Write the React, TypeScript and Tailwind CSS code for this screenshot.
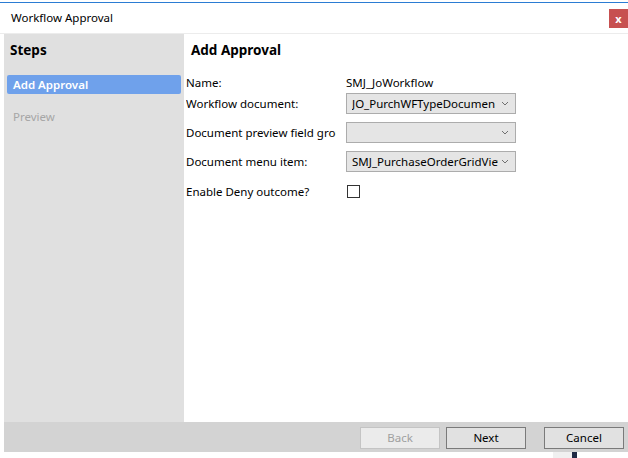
import React from "react";

const font = { fontFamily: '"Noto Sans", "Open Sans", sans-serif' };

function Chevron() {
  return (
    <svg width="8" height="5" viewBox="0 0 8 5" className="shrink-0">
      <path d="M1 1 L4 4 L7 1" fill="none" stroke="#707070" strokeWidth="1" />
    </svg>
  );
}

function Select({ value }: { value: string }) {
  return (
    <div className="flex h-[21px] w-[170px] items-center justify-between border border-[#acacac] bg-[#e5e5e5] pl-[5px] pr-[6px]">
      <span className="w-[146px] overflow-hidden whitespace-nowrap text-[11.5px] text-black">{value}</span>
      <Chevron />
    </div>
  );
}

function Row({ label, children, className }: { label: string; children: React.ReactNode; className: string }) {
  return (
    <div className={"flex items-center " + className}>
      <div className="mr-[10px] w-[150px] overflow-hidden whitespace-nowrap text-[11.5px] text-black">{label}</div>
      {children}
    </div>
  );
}

export default function App() {
  return (
    <div className="relative flex h-[458px] w-[628px] flex-col overflow-hidden bg-white" style={font}>
      {/* top edge */}
      <div className="h-[2px] shrink-0 bg-white" />
      <div className="h-px shrink-0 bg-[#2b7cd3]" />
      {/* title bar */}
      <div className="flex h-[30px] shrink-0 items-start justify-between">
        <div className="pl-[11px] pt-[6px] text-[11.5px] leading-[18px] text-black">Workflow Approval</div>
        <div className="mt-[6px] flex h-[19px] w-[19px] items-center justify-center bg-[#c75050] text-[11px] font-bold leading-none text-white">
          x
        </div>
      </div>
      <div className="h-px shrink-0 bg-[#ececec]" />
      {/* body */}
      <div className="flex h-[388px] shrink-0 pl-[4px]">
        <div className="flex w-[180px] flex-col bg-[#e0e0e0]">
          <div className="pl-[6px] pt-[7px] text-[13.5px] font-bold leading-[18px] text-black">Steps</div>
          <div className="mx-[3px] mt-[16px] flex h-[19px] items-center rounded-[2px] bg-[#6fa1eb] pl-[6px] text-[11.5px] font-semibold text-white">
            Add Approval
          </div>
          <div className="mt-[15px] pl-[9px] text-[11.5px] leading-[16px] text-[#a6a6a6]">Preview</div>
        </div>
        <div className="flex flex-1 flex-col pl-[2px]">
          <div className="pl-[5px] pt-[7px] text-[13.5px] font-bold leading-[18px] text-black">Add Approval</div>
          <Row label="Name:" className="mt-[16px] h-[16px]">
            <span className="text-[11.5px] text-black">SMJ_JoWorkflow</span>
          </Row>
          <Row label="Workflow document:" className="mt-[2px] h-[21px]">
            <Select value="JO_PurchWFTypeDocumen" />
          </Row>
          <Row label="Document preview field group:" className="mt-[8px] h-[21px]">
            <Select value="" />
          </Row>
          <Row label="Document menu item:" className="mt-[8px] h-[21px]">
            <Select value="SMJ_PurchaseOrderGridView" />
          </Row>
          <Row label="Enable Deny outcome?" className="mt-[9px] h-[21px]">
            <div className="ml-[1px] h-[13px] w-[13px] border border-[#333333] bg-white" />
          </Row>
        </div>
      </div>
      {/* footer */}
      <div className="ml-[4px] flex h-[30px] shrink-0 items-start justify-end bg-[#d3d3d3] pr-[4px] pt-[5px]">
        <div className="flex h-[22px] w-[80px] items-center justify-center border border-[#c4c4c4] bg-[#ebebeb] text-[11.5px] text-[#a0a0a0]">
          Back
        </div>
        <div className="ml-[6px] flex h-[22px] w-[80px] items-center justify-center border border-[#7a7a7a] bg-[#e1e1e1] text-[11.5px] text-black">
          Next
        </div>
        <div className="ml-[18px] flex h-[22px] w-[80px] items-center justify-center border border-[#7a7a7a] bg-[#e1e1e1] text-[11.5px] text-black">
          Cancel
        </div>
      </div>
      <div className="flex h-[6px] shrink-0 bg-white">
        <div className="ml-[553px] h-full w-[19px] bg-[#f0f0f0]" />
        <div className="h-full w-[5px] bg-[#1f2a44]" />
      </div>
    </div>
  );
}
